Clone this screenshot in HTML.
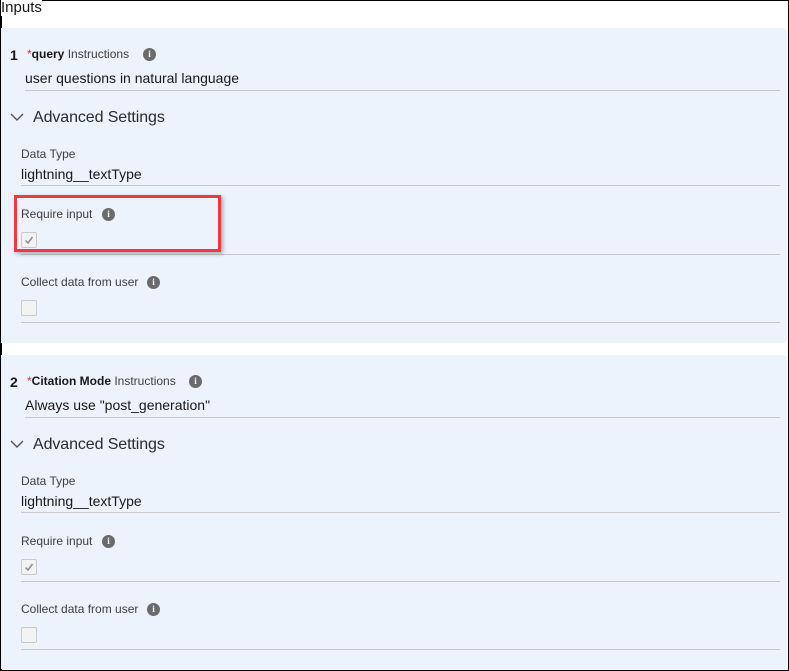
<!DOCTYPE html>
<html><head><meta charset="utf-8"><style>
*{margin:0;padding:0;box-sizing:border-box}
html,body{width:789px;height:671px;overflow:hidden;background:#fff}
body{position:relative;font-family:"Segoe UI","Liberation Sans",sans-serif;color:#181818}
.frame{position:absolute;left:0;top:0;width:789px;height:671px;border:1px solid #000;border-left-width:2px}
.panel{position:absolute;left:1px;width:786px;background:#edf3fd;border-radius:0 4px 4px 0}
.t{position:absolute;white-space:nowrap;margin-top:2px;z-index:2}
.line{position:absolute;height:1px;background:#c9c9c9}
.info{position:absolute;width:13px;height:13px;border-radius:50%;background:#6b6b6b;color:#fff;font:bold 9px/13px "Liberation Serif",serif;text-align:center}
.cb{position:absolute;width:16px;height:16px;border:1px solid #c9c9c9;border-radius:2px;background:#f3f3f3}
.cb svg{position:absolute;left:2px;top:2px}
.lbl{font-size:12px;color:#3e3e3e}
.val{font-size:14px;color:#181818}
</style></head><body>
<div class="frame"></div>
<div class="t" style="left:1px;top:-3px;font-size:15px;color:#181818;background:#fff;z-index:3">Inputs</div>

<div class="panel" style="top:28px;height:315px"></div>
<div class="panel" style="top:355px;height:314px"></div>

<div class="t" style="left:10px;top:45px;font-size:14px;font-weight:bold">1</div>
<div class="t" style="left:27px;top:45px;font-size:12px"><span style="color:#c23934">*</span><b>query</b> <span style="color:#3e3e3e">Instructions</span></div>
<div class="info" style="left:143px;top:48px">i</div>
<div class="t val" style="left:25px;top:68px">user questions in natural language</div>
<div class="line" style="left:25px;top:90px;width:755px"></div>
<svg style="position:absolute;left:10px;top:113px" width="14" height="9"><path d="M1 1 L7 7 L13 1" fill="none" stroke="#555" stroke-width="1.4"/></svg>
<div class="t" style="left:33px;top:107px;font-size:16px;color:#2b2b2b;letter-spacing:-0.1px">Advanced Settings</div>
<div class="t lbl" style="left:21px;top:145px">Data Type</div>
<div class="t val" style="left:21px;top:164px">lightning__textType</div>
<div class="line" style="left:21px;top:185px;width:759px"></div>
<div class="t lbl" style="left:21px;top:205px">Require input</div>
<div class="info" style="left:102px;top:208px">i</div>
<div class="cb" style="left:21px;top:232px"><svg width="10" height="10"><path d="M1.5 5.5 L4 8 L8.5 2" fill="none" stroke="#8a8a8a" stroke-width="1.5"/></svg></div>
<div class="line" style="left:21px;top:254px;width:759px"></div>
<div style="position:absolute;left:14px;top:195px;width:207px;height:57px;border:3px solid #f0393f;box-shadow:2px 2px 4px rgba(0,0,0,.3)"></div>
<div class="t lbl" style="left:21px;top:273px">Collect data from user</div>
<div class="info" style="left:147px;top:276px">i</div>
<div class="cb" style="left:21px;top:300px"></div>
<div class="line" style="left:21px;top:322px;width:759px"></div>

<div class="t" style="left:10px;top:372px;font-size:14px;font-weight:bold">2</div>
<div class="t" style="left:27px;top:372px;font-size:12px"><span style="color:#c23934">*</span><b>Citation Mode</b> <span style="color:#3e3e3e">Instructions</span></div>
<div class="info" style="left:189px;top:375px">i</div>
<div class="t val" style="left:25px;top:395px">Always use "post_generation"</div>
<div class="line" style="left:25px;top:417px;width:755px"></div>
<svg style="position:absolute;left:10px;top:440px" width="14" height="9"><path d="M1 1 L7 7 L13 1" fill="none" stroke="#555" stroke-width="1.4"/></svg>
<div class="t" style="left:33px;top:434px;font-size:16px;color:#2b2b2b;letter-spacing:-0.1px">Advanced Settings</div>
<div class="t lbl" style="left:21px;top:472px">Data Type</div>
<div class="t val" style="left:21px;top:491px">lightning__textType</div>
<div class="line" style="left:21px;top:512px;width:759px"></div>
<div class="t lbl" style="left:21px;top:532px">Require input</div>
<div class="info" style="left:102px;top:535px">i</div>
<div class="cb" style="left:21px;top:559px"><svg width="10" height="10"><path d="M1.5 5.5 L4 8 L8.5 2" fill="none" stroke="#8a8a8a" stroke-width="1.5"/></svg></div>
<div class="line" style="left:21px;top:581px;width:759px"></div>
<div class="t lbl" style="left:21px;top:600px">Collect data from user</div>
<div class="info" style="left:147px;top:603px">i</div>
<div class="cb" style="left:21px;top:627px"></div>
<div class="line" style="left:21px;top:649px;width:759px"></div>
</body></html>
